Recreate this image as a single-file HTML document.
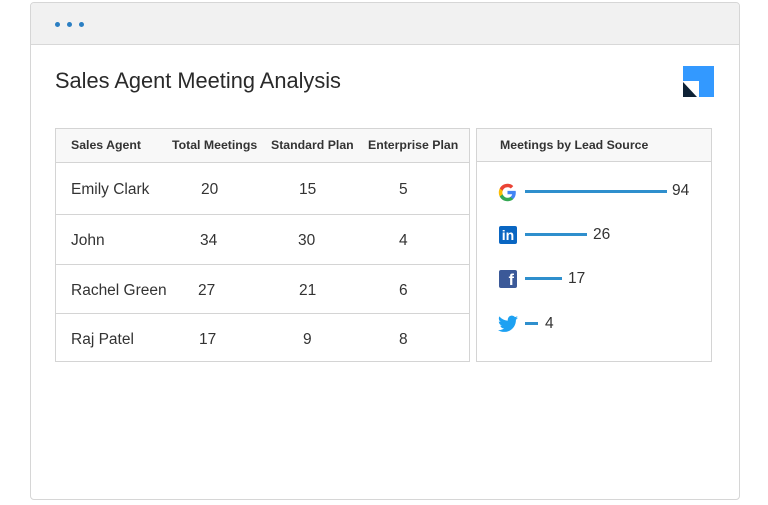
<!DOCTYPE html>
<html><head><style>
*{margin:0;padding:0;box-sizing:border-box}
body{width:768px;height:505px;background:#fff;font-family:"Liberation Sans",sans-serif;position:relative;overflow:hidden;color:#333}
.card{position:absolute;left:30px;top:2px;width:710px;height:498px;border:1px solid #d6d6d6;border-radius:4px;background:#fff;overflow:hidden}
.hdr{height:42px;background:#f1f1f1;border-bottom:1px solid #d8d8d8;position:relative}
.dot{position:absolute;top:19px;width:5px;height:5px;border-radius:50%;background:#2b7fc3}
.title{position:absolute;left:24px;top:65px;font-size:21.8px;color:#2a2a2a}
.abs{position:absolute}
.tbl{position:absolute;left:55px;top:128px;width:415px;height:234px;border:1px solid #d4d4d4}
.th{position:absolute;top:0;height:34px;line-height:33px;font-size:12.3px;font-weight:bold;color:#333;white-space:nowrap}
.row{position:absolute;left:0;width:413px;border-top:1px solid #d4d4d4}
.c{position:absolute;font-size:15.5px;color:#333;white-space:nowrap}
.side{position:absolute;left:476px;top:128px;width:236px;height:234px;border:1px solid #d4d4d4}
.bar{position:absolute;left:48px;height:3px;background:#2f8fcd}
.num{position:absolute;font-size:15.5px;color:#333}
</style></head><body>
<div class="card">
 <div class="hdr"><div class="dot" style="left:24px"></div><div class="dot" style="left:36px"></div><div class="dot" style="left:48px"></div></div>
 <div class="title">Sales Agent Meeting Analysis</div>
 <div class="abs" style="left:652px;top:63px;width:31px;height:31px;background:#3399ff"></div>
 <svg class="abs" style="left:652px;top:78px" width="16" height="16"><rect width="16" height="16" fill="#fff"/><polygon points="0,1 0,16 14,16" fill="#0e2236"/></svg>
</div>
<div class="tbl">
 <div class="abs" style="left:0;top:0;width:413px;height:34px;background:#f8f8f8"></div>
 <div class="th" style="left:15px">Sales Agent</div>
 <div class="th" style="left:116px">Total Meetings</div>
 <div class="th" style="left:215px">Standard Plan</div>
 <div class="th" style="left:312px">Enterprise Plan</div>
 <div class="row" style="top:33px;height:52px"><span class="c" style="left:15px;top:18px">Emily Clark</span><span class="c" style="left:145px;top:18px">20</span><span class="c" style="left:243px;top:18px">15</span><span class="c" style="left:343px;top:18px">5</span></div>
 <div class="row" style="top:85px;height:50px"><span class="c" style="left:15px;top:17px">John</span><span class="c" style="left:144px;top:17px">34</span><span class="c" style="left:242px;top:17px">30</span><span class="c" style="left:343px;top:17px">4</span></div>
 <div class="row" style="top:135px;height:49px"><span class="c" style="left:15px;top:17px">Rachel Green</span><span class="c" style="left:142px;top:17px">27</span><span class="c" style="left:243px;top:17px">21</span><span class="c" style="left:343px;top:17px">6</span></div>
 <div class="row" style="top:184px;height:48px"><span class="c" style="left:15px;top:17px">Raj Patel</span><span class="c" style="left:143px;top:17px">17</span><span class="c" style="left:247px;top:17px">9</span><span class="c" style="left:343px;top:17px">8</span></div>
</div>
<div class="side">
 <div class="abs" style="left:0;top:0;width:234px;height:33px;background:#f8f8f8;border-bottom:1px solid #d4d4d4"></div>
 <div class="th" style="left:23px">Meetings by Lead Source</div>
 <svg class="abs" style="left:21px;top:54px" width="19" height="19" viewBox="0 0 24 24"><path d="M22.5 12.2c0-.8-.1-1.5-.2-2.2H12v4.2h5.9c-.3 1.4-1 2.5-2.2 3.3v2.7h3.6c2.1-1.9 3.200-4.7 3.2-8z" fill="#4285f4"/><path d="M12 23c3 0 5.5-1 7.3-2.7l-3.6-2.7c-1 .7-2.2 1.1-3.7 1.1-2.8 0-5.2-1.9-6.1-4.5H2.2v2.8C4 20.6 7.7 23 12 23z" fill="#34a853"/><path d="M5.9 14.2c-.2-.7-.4-1.4-.4-2.2s.1-1.5.4-2.2V7H2.2C1.4 8.5 1 10.2 1 12s.4 3.5 1.2 5z" fill="#fbbc05"/><path d="M12 5.4c1.6 0 3 .6 4.2 1.6l3.1-3.1C17.5 2.1 15 1 12 1 7.7 1 4 3.4 2.2 7l3.7 2.8c.9-2.6 3.3-4.4 6.1-4.4z" fill="#ea4335"/></svg>
 <div class="bar" style="top:61px;width:142px"></div><div class="num" style="left:195px;top:53px">94</div>
 <div class="abs" style="left:22px;top:97px;width:18px;height:18px;background:#0a66c2;border-radius:2px;color:#fff;font-weight:bold;font-size:14px;line-height:19px;text-align:center">in</div>
 <div class="bar" style="top:104px;width:62px"></div><div class="num" style="left:116px;top:97px">26</div>
 <div class="abs" style="left:22px;top:141px;width:18px;height:18px;background:#3b5998;border-radius:2px;color:#fff;font-weight:bold;font-size:16px;line-height:21px;text-align:right;padding-right:3px;overflow:hidden">f</div>
 <div class="bar" style="top:148px;width:37px"></div><div class="num" style="left:91px;top:141px">17</div>
 <svg class="abs" style="left:21px;top:186px" width="20" height="18" viewBox="0 0 24 20"><path d="M24 2.4c-.9.4-1.8.7-2.8.8 1-.6 1.800-1.6 2.2-2.7-1 .6-2 1-3.1 1.2C19.3.6 18 0 16.6 0c-2.7 0-4.9 2.2-4.9 4.9 0 .4 0 .8.1 1.1C7.7 5.8 4.1 3.9 1.7.9c-.4.7-.7 1.6-.7 2.5 0 1.7.9 3.2 2.2 4.1-.8 0-1.600-.2-2.2-.6v.1c0 2.4 1.7 4.4 3.9 4.8-.4.1-.8.2-1.3.2-.3 0-.6 0-.9-.1.6 2 2.4 3.4 4.6 3.4-1.7 1.3-3.800 2.1-6.1 2.1-.4 0-.8 0-1.2-.1 2.2 1.4 4.8 2.2 7.5 2.2 9.1 0 14-7.5 14-14v-.6c1-.7 1.8-1.6 2.5-2.5z" fill="#1da1f2"/></svg>
 <div class="bar" style="top:193px;width:13px"></div><div class="num" style="left:68px;top:186px">4</div>
</div>
</body></html>
